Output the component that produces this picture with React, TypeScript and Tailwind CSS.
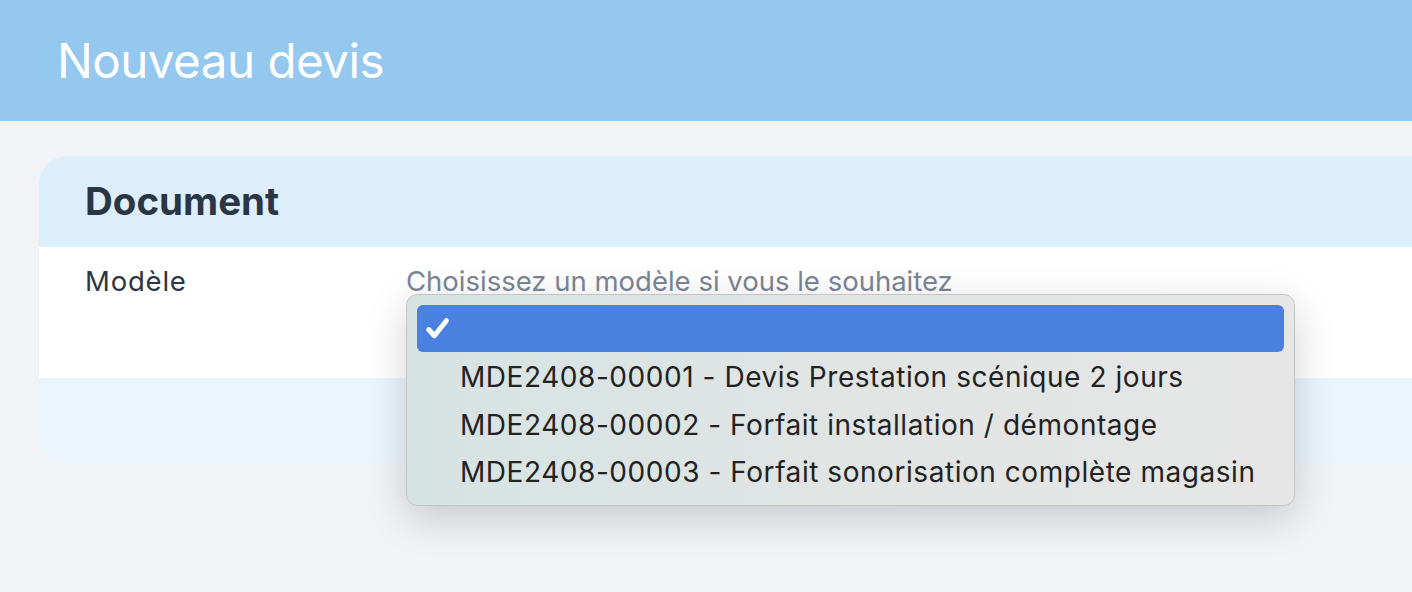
const options = [
  "MDE2408-00001 - Devis Prestation scénique 2 jours",
  "MDE2408-00002 - Forfait installation / démontage",
  "MDE2408-00003 - Forfait sonorisation complète magasin",
];

// native-looking select popup (macOS style)
function SelectPopup() {
  return (
    <div className="absolute left-[367px] top-[47px] w-[889px] h-[212px] rounded-[11px] border border-[#c4c4c4] bg-gradient-to-r from-[#d6e3e3] via-[#e1e5e4] to-[#e6e6e6] shadow-[0_12px_40px_rgba(0,0,0,0.18)] px-[10px] pt-[10px] font-['Inter',sans-serif]">
      <div className="h-[47px] rounded-[6px] bg-[#4a80e0] flex items-center pl-[8px]">
        <svg width="25" height="25" viewBox="0 0 24 24" fill="none">
          <path
            d="M3.5 13 L9 19 L20.5 4.5"
            stroke="white"
            strokeWidth="4.8"
            strokeLinecap="round"
            strokeLinejoin="round"
          />
        </svg>
      </div>
      {options.map((o) => (
        <div
          key={o}
          className="h-[47.5px] flex items-center pl-[43px] pt-[3px] text-[28px] text-[#222] tracking-[0.55px]"
        >
          {o}
        </div>
      ))}
    </div>
  );
}

export default function App() {
  return (
    <div className="w-[1412px] h-[592px] bg-[#f1f3f7] overflow-hidden font-['Inter',sans-serif]">
      <div className="h-[121px] bg-[#94c8ee] flex items-center pl-[57px]">
        <h1 className="text-[47.5px] text-white font-normal tracking-[-0.5px]">Nouveau devis</h1>
      </div>

      <div className="pt-[35px] pl-[39px]">
        <div className="w-[1420px] rounded-l-[28px]">
          <div className="h-[91px] bg-[#ddeefd] rounded-tl-[28px] flex items-center pl-[46px]">
            <h2 className="text-[38.5px] font-bold text-[#2b3645]">Document</h2>
          </div>
          <div className="relative h-[131px] bg-white flex items-start pl-[46px] pt-[14px]">
            <div className="w-[321px] text-[27.5px] text-[#2b3645] tracking-[0.8px]">Modèle</div>
            <div className="text-[27.5px] text-[#7c8594]">Choisissez un modèle si vous le souhaitez</div>
            <SelectPopup />
          </div>
          <div className="h-[84px] bg-[#ebf5fe] rounded-bl-[28px]" />
        </div>
      </div>
    </div>
  );
}
